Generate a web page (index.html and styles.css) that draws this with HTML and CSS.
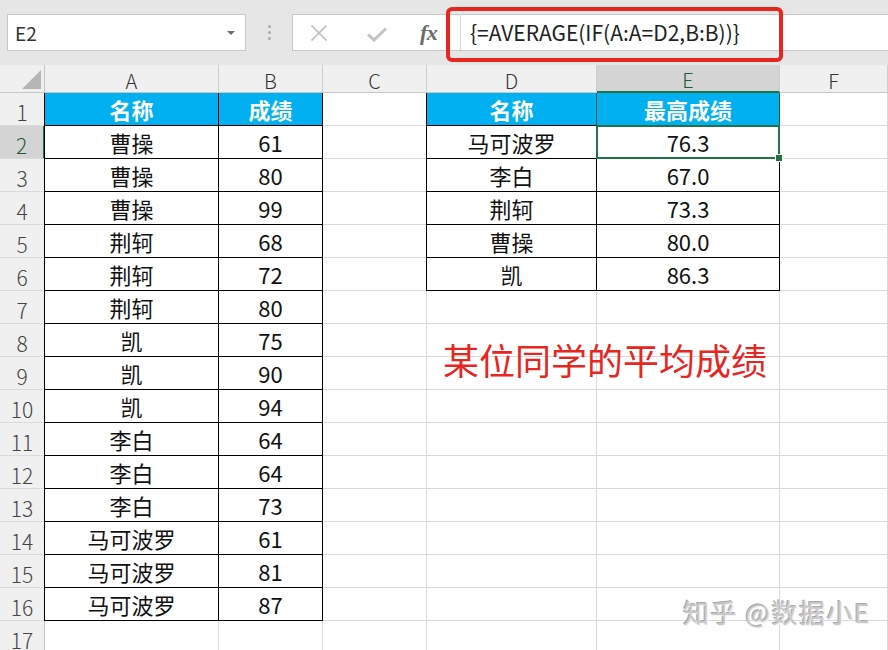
FILE: index.html
```html
<!DOCTYPE html>
<html lang="zh-CN">
<head>
<meta charset="utf-8">
<title>Excel</title>
<link rel="stylesheet" href="styles.css">
</head>
<body>
<div class="app">
  <div class="toolbar">
    <div class="namebox">
      <span class="name">E2</span>
      <span class="caret"></span>
    </div>
    <div class="dots"><i></i><i></i><i></i></div>
    <div class="fbar">
      <div class="fbtns">
        <svg class="ico-x" width="18" height="18" viewBox="0 0 18 18"><path d="M1.5 1.5 L16.5 16.5 M16.5 1.5 L1.5 16.5" stroke="#bdbdbd" stroke-width="1.7" fill="none"/></svg>
        <svg class="ico-ok" width="22" height="16" viewBox="0 0 22 16"><path d="M2 8.5 L8 14 L20 2.5" stroke="#c2c2c2" stroke-width="3" fill="none"/></svg>
        <span class="fx">fx</span>
      </div>
      <div class="finput">{=AVERAGE(IF(A:A=D2,B:B))}</div>
    </div>
    <div class="redbox"></div>
  </div>

  <div class="sheet">
    <div class="corner"><span class="tri"></span></div>
    <div class="ch">A</div><div class="ch">B</div><div class="ch">C</div><div class="ch">D</div><div class="ch ch-sel">E</div><div class="ch">F</div>

    <div class="rh">1</div>
    <div class="c tb tl hd">名称</div><div class="c tb hd">成绩</div><div class="c"></div><div class="c tb tl hd">名称</div><div class="c tb hd e1">最高成绩</div><div class="c"></div>

    <div class="rh rh-sel">2</div>
    <div class="c tb tl">曹操</div><div class="c tb">61</div><div class="c"></div><div class="c tb tl">马可波罗</div><div class="c tb sel">76.3</div><div class="c"></div>

    <div class="rh">3</div>
    <div class="c tb tl">曹操</div><div class="c tb">80</div><div class="c"></div><div class="c tb tl">李白</div><div class="c tb">67.0</div><div class="c"></div>

    <div class="rh">4</div>
    <div class="c tb tl">曹操</div><div class="c tb">99</div><div class="c"></div><div class="c tb tl">荆轲</div><div class="c tb">73.3</div><div class="c"></div>

    <div class="rh">5</div>
    <div class="c tb tl">荆轲</div><div class="c tb">68</div><div class="c"></div><div class="c tb tl">曹操</div><div class="c tb">80.0</div><div class="c"></div>

    <div class="rh">6</div>
    <div class="c tb tl">荆轲</div><div class="c tb">72</div><div class="c"></div><div class="c tb tl">凯</div><div class="c tb">86.3</div><div class="c"></div>

    <div class="rh">7</div>
    <div class="c tb tl">荆轲</div><div class="c tb">80</div><div class="c"></div><div class="c"></div><div class="c"></div><div class="c"></div>

    <div class="rh">8</div>
    <div class="c tb tl">凯</div><div class="c tb">75</div><div class="c"></div><div class="c"></div><div class="c"></div><div class="c"></div>

    <div class="rh">9</div>
    <div class="c tb tl">凯</div><div class="c tb">90</div><div class="c"></div><div class="c"></div><div class="c"></div><div class="c"></div>

    <div class="rh">10</div>
    <div class="c tb tl">凯</div><div class="c tb">94</div><div class="c"></div><div class="c"></div><div class="c"></div><div class="c"></div>

    <div class="rh">11</div>
    <div class="c tb tl">李白</div><div class="c tb">64</div><div class="c"></div><div class="c"></div><div class="c"></div><div class="c"></div>

    <div class="rh">12</div>
    <div class="c tb tl">李白</div><div class="c tb">64</div><div class="c"></div><div class="c"></div><div class="c"></div><div class="c"></div>

    <div class="rh">13</div>
    <div class="c tb tl">李白</div><div class="c tb">73</div><div class="c"></div><div class="c"></div><div class="c"></div><div class="c"></div>

    <div class="rh">14</div>
    <div class="c tb tl">马可波罗</div><div class="c tb">61</div><div class="c"></div><div class="c"></div><div class="c"></div><div class="c"></div>

    <div class="rh">15</div>
    <div class="c tb tl">马可波罗</div><div class="c tb">81</div><div class="c"></div><div class="c"></div><div class="c"></div><div class="c"></div>

    <div class="rh">16</div>
    <div class="c tb tl">马可波罗</div><div class="c tb">87</div><div class="c"></div><div class="c"></div><div class="c"></div><div class="c"></div>

    <div class="rh">17</div>
    <div class="c"></div><div class="c"></div><div class="c"></div><div class="c"></div><div class="c"></div><div class="c"></div>

    <div class="note">某位同学的平均成绩</div>
    <div class="mark">知乎 @数据小E</div>
  </div>
</div>
</body>
</html>
```

FILE: styles.css
```css
html, body {
  margin: 0;
  padding: 0;
  width: 888px;
  height: 650px;
  overflow: hidden;
  background: #ffffff;
  font-family: "Noto Sans CJK SC", "Noto Sans", sans-serif;
}

.app {
  width: 888px;
  height: 650px;
  overflow: hidden;
}

/* ---------- toolbar / formula bar ---------- */
.toolbar {
  position: relative;
  height: 65px;
  box-sizing: border-box;
  padding: 14px 0 0 7px;
  background: #e6e6e6;
  display: flex;
  align-items: flex-start;
}

.namebox {
  width: 239px;
  height: 37px;
  box-sizing: border-box;
  background: #fff;
  border: 1px solid #c8c8c8;
  display: flex;
  align-items: center;
  justify-content: space-between;
  padding: 0 10px 0 7px;
}

.name {
  font-size: 19px;
  color: #333;
  line-height: 1;
}

.caret {
  width: 0;
  height: 0;
  border-left: 4px solid transparent;
  border-right: 4px solid transparent;
  border-top: 4px solid #6a6a6a;
}

.dots {
  width: 46px;
  height: 37px;
  display: flex;
  flex-direction: column;
  align-items: center;
  justify-content: center;
  gap: 3px;
}

.dots i {
  display: block;
  width: 3px;
  height: 3px;
  border-radius: 50%;
  background: #a8a8a8;
}

.fbar {
  flex: 1;
  height: 37px;
  box-sizing: border-box;
  background: #fff;
  border: 1px solid #c8c8c8;
  border-right: none;
  display: flex;
}

.fbtns {
  width: 167px;
  display: flex;
  align-items: center;
  padding-left: 17px;
  box-sizing: border-box;
}

.ico-x {
  margin-right: 38px;
}

.ico-ok {
  margin-right: 32px;
  margin-top: 2px;
}

.fx {
  font-family: "Liberation Serif", "DejaVu Serif", serif;
  font-style: italic;
  font-weight: 700;
  font-size: 22px;
  color: #6a6a6a;
  letter-spacing: -0.5px;
  line-height: 1;
}

.finput {
  flex: 1;
  border-left: 1px solid #d6d6d6;
  padding-left: 9px;
  font-size: 21px;
  color: #222;
  display: flex;
  align-items: center;
  line-height: 1;
}

.redbox {
  position: absolute;
  left: 446px;
  top: 7px;
  width: 337px;
  height: 55px;
  box-sizing: border-box;
  border: 4px solid #e6261f;
  border-radius: 6px;
}

/* ---------- sheet grid ---------- */
.sheet {
  position: relative;
  display: grid;
  grid-template-columns: 45px 174px 104px 104px 170px 183px 108px;
  grid-template-rows: 28px repeat(17, 33px);
}

.corner {
  position: relative;
  background: #f0f0f0;
  border-right: 1px solid #c6c6c6;
  border-bottom: 1px solid #c6c6c6;
  box-sizing: border-box;
}

.tri {
  position: absolute;
  right: 3px;
  bottom: 3px;
  width: 0;
  height: 0;
  border-left: 19px solid transparent;
  border-bottom: 19px solid #b6b6b6;
}

.ch {
  background: #f0f0f0;
  border-right: 1px solid #cfcfcf;
  border-bottom: 1px solid #c6c6c6;
  box-sizing: border-box;
  display: flex;
  align-items: center;
  justify-content: center;
  padding-top: 4px;
  font-size: 20px;
  font-weight: 300;
  color: #333;
  line-height: 1;
}

.ch-sel {
  background: #d4d4d4;
  border-bottom: 2px solid #217346;
  color: #1f5a3b;
}

.rh {
  background: #f0f0f0;
  border-right: 1px solid #c6c6c6;
  border-bottom: 1px solid #dadada;
  box-sizing: border-box;
  display: flex;
  align-items: center;
  justify-content: center;
  padding-top: 6px;
  font-size: 21px;
  font-weight: 300;
  color: #444;
  line-height: 1;
}

.rh-sel {
  background: #d4d4d4;
  border-right: 2px solid #217346;
  color: #1f5a3b;
}

.c {
  border-right: 1px solid #d9d9d9;
  border-bottom: 1px solid #d9d9d9;
  box-sizing: border-box;
  display: flex;
  align-items: center;
  justify-content: center;
  font-size: 22px;
  color: #111;
  line-height: 1;
  white-space: nowrap;
}

.tb {
  border-right-color: #000;
  border-bottom-color: #000;
}

.tl {
  box-shadow: -1px 0 0 #000;
}

.hd {
  background: #00b0f0;
  color: #fff;
  font-weight: 700;
}

.e1 {
  box-shadow: -1px 0 0 #1d5e48;
  border-right-color: #1d5e48;
}

.sel {
  position: relative;
}

.sel::before {
  content: "";
  position: absolute;
  left: -1px;
  top: -1px;
  right: -1px;
  bottom: -1px;
  border: 2px solid #217346;
  z-index: 2;
}

.sel::after {
  content: "";
  position: absolute;
  right: -4px;
  bottom: -4px;
  width: 6px;
  height: 6px;
  background: #217346;
  border: 1px solid #fff;
  z-index: 3;
}

.note {
  position: absolute;
  left: 443px;
  top: 276px;
  font-size: 36px;
  line-height: 1;
  color: #e6261f;
  white-space: nowrap;
}

.mark {
  position: absolute;
  left: 683px;
  top: 534px;
  font-size: 26px;
  letter-spacing: 1.5px;
  line-height: 1;
  color: #c8c8c8;
  text-shadow: 1px 1px 0 #f4f4f4, -1px -1px 0 #a8a8a8;
  white-space: nowrap;
}
```
